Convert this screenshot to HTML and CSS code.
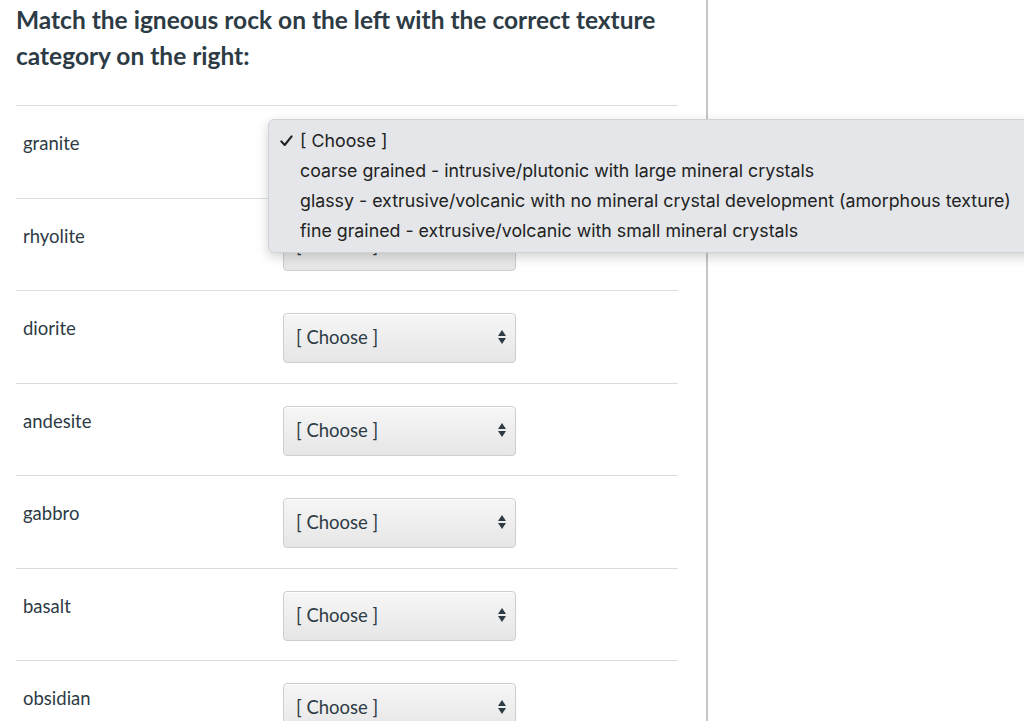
FILE: index.html
```html
<!DOCTYPE html>
<html lang="en">
<head>
  <meta charset="UTF-8" />
  <title>Matching Question</title>
  <link rel="stylesheet" href="styles.css">
</head>
<body>
  <div class="page">
    <div class="question">
      <h2 class="prompt">Match the igneous rock on the left with the correct texture category on the right:</h2>

      <div class="answers">
        <div class="row">
          <div class="label">granite</div>
          <div class="select"><span>[ Choose ]</span><span class="arrows"></span></div>
        </div>
        <div class="row">
          <div class="label">rhyolite</div>
          <div class="select"><span>[ Choose ]</span><span class="arrows"></span></div>
        </div>
        <div class="row">
          <div class="label">diorite</div>
          <div class="select"><span>[ Choose ]</span><span class="arrows"></span></div>
        </div>
        <div class="row">
          <div class="label">andesite</div>
          <div class="select"><span>[ Choose ]</span><span class="arrows"></span></div>
        </div>
        <div class="row">
          <div class="label">gabbro</div>
          <div class="select"><span>[ Choose ]</span><span class="arrows"></span></div>
        </div>
        <div class="row">
          <div class="label">basalt</div>
          <div class="select"><span>[ Choose ]</span><span class="arrows"></span></div>
        </div>
        <div class="row">
          <div class="label">obsidian</div>
          <div class="select"><span>[ Choose ]</span><span class="arrows"></span></div>
        </div>
      </div>
    </div>
    <div class="side"></div>
  </div>

  <!-- open dropdown for the first select -->
  <ul class="menu">
    <li>
      <svg class="check" width="13" height="12" viewBox="0 0 13 12"><path d="M1.3 6.4 L4.7 10 L11.6 1.4" fill="none" stroke="#222" stroke-width="2.1" stroke-linecap="round" stroke-linejoin="round"/></svg>
      [ Choose ]
    </li>
    <li>coarse grained - intrusive/plutonic with large mineral crystals</li>
    <li>glassy - extrusive/volcanic with no mineral crystal development (amorphous texture)</li>
    <li>fine grained - extrusive/volcanic with small mineral crystals</li>
  </ul>
</body>
</html>
```

FILE: styles.css
```css
* {
  box-sizing: border-box;
}
body {
  margin: 0;
  font-family: Lato, 'Liberation Sans', sans-serif;
  color: #2d3b45;
  background: white;
  overflow: hidden;
}
.page {
  display: flex;
  min-height: 721px;
}
.question {
  width: 708px;
  border-right: 2px solid #c7c7c7;
  padding: 2px 28px 0 16px;
}
.prompt {
  font-size: 24.5px;
  font-weight: bold;
  line-height: 36px;
  margin: 0 0 31px;
}
.row {
  display: flex;
  border-top: 1px solid #dadddf;
  height: 92.5px;
  padding: 22px 0 0 7px;
}
.label {
  width: 260px;
  font-size: 18.5px;
  line-height: 22px;
  padding-top: 4px;
}
.select {
  width: 233px;
  height: 50px;
  display: flex;
  align-items: center;
  justify-content: space-between;
  padding: 0 9px 2px 12px;
  border: 1px solid #c9ced2;
  border-radius: 4px;
  background: linear-gradient(#f6f6f6, #e6e6e6);
  box-shadow: inset 0 1px 0 #fff;
  font-size: 18.5px;
  color: #2d3b45;
}
.arrows {
  position: relative;
  width: 8px;
  height: 14px;
}
.arrows::before,
.arrows::after {
  content: '';
  position: absolute;
  left: 0;
  border-left: 4px solid transparent;
  border-right: 4px solid transparent;
}
.arrows::before {
  top: 0;
  border-bottom: 6px solid #2d3b45;
}
.arrows::after {
  bottom: 0;
  border-top: 6px solid #2d3b45;
}
.menu {
  position: absolute;
  left: 268px;
  top: 119px;
  width: 780px;
  height: 134px;
  margin: 0;
  padding: 6px 0 0 31px;
  list-style: none;
  background: #e4e6e9;
  border: 1px solid #d0d3d6;
  border-radius: 6px;
  box-shadow: 0 4px 12px rgba(0,0,0,0.18);
  font-family: Inter, 'Liberation Sans', sans-serif;
  font-size: 17.8px;
  color: #222;
}
.menu li {
  position: relative;
  height: 30px;
  line-height: 30px;
}
.check {
  position: absolute;
  left: -20px;
  top: 9px;
}
```
